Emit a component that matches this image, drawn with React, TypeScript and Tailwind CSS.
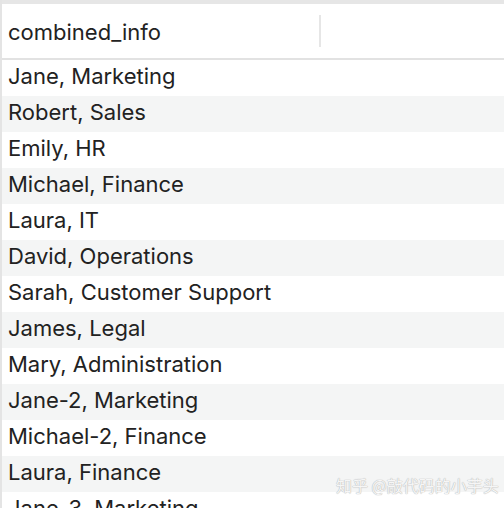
import React from "react";

const rows = [
  "Jane, Marketing",
  "Robert, Sales",
  "Emily, HR",
  "Michael, Finance",
  "Laura, IT",
  "David, Operations",
  "Sarah, Customer Support",
  "James, Legal",
  "Mary, Administration",
  "Jane-2, Marketing",
  "Michael-2, Finance",
  "Laura, Finance",
  "Jane-3, Marketing",
];

export default function App() {
  return (
    <div
      className="relative w-[504px] h-[508px] overflow-hidden bg-white text-[#222] border-l-2 border-[#e4e4e4]"
      style={{ fontFamily: "Inter, 'Noto Sans', sans-serif" }}
    >
      <div className="h-[4px] bg-[#e6e6e6]" />
      <div className="flex items-center h-[56px] border-b-2 border-[#e2e2e2]">
        <div className="w-[317px] pl-[6px] pt-[2px] text-[22px] leading-none">combined_info</div>
        <div className="w-[2px] h-[32px] bg-[#e6e6e6]" />
      </div>
      {rows.map((r, i) => (
        <div
          key={i}
          className={`h-[36px] flex items-center pl-[6px] pb-[4px] text-[22px] leading-none whitespace-nowrap ${
            i % 2 === 1 ? "bg-[#f4f5f5]" : "bg-white"
          }`}
        >
          {r}
        </div>
      ))}
      <div
        className="absolute left-[334px] top-[477px] text-[16px] leading-none whitespace-nowrap text-[#f6f6f6]"
        style={{
          fontFamily: "'Noto Sans CJK SC', sans-serif",
          textShadow: "0 0 1px #b0b0b0, 0 0 1px #c0c0c0",
        }}
      >
        知乎 @敲代码的小芋头
      </div>
    </div>
  );
}
